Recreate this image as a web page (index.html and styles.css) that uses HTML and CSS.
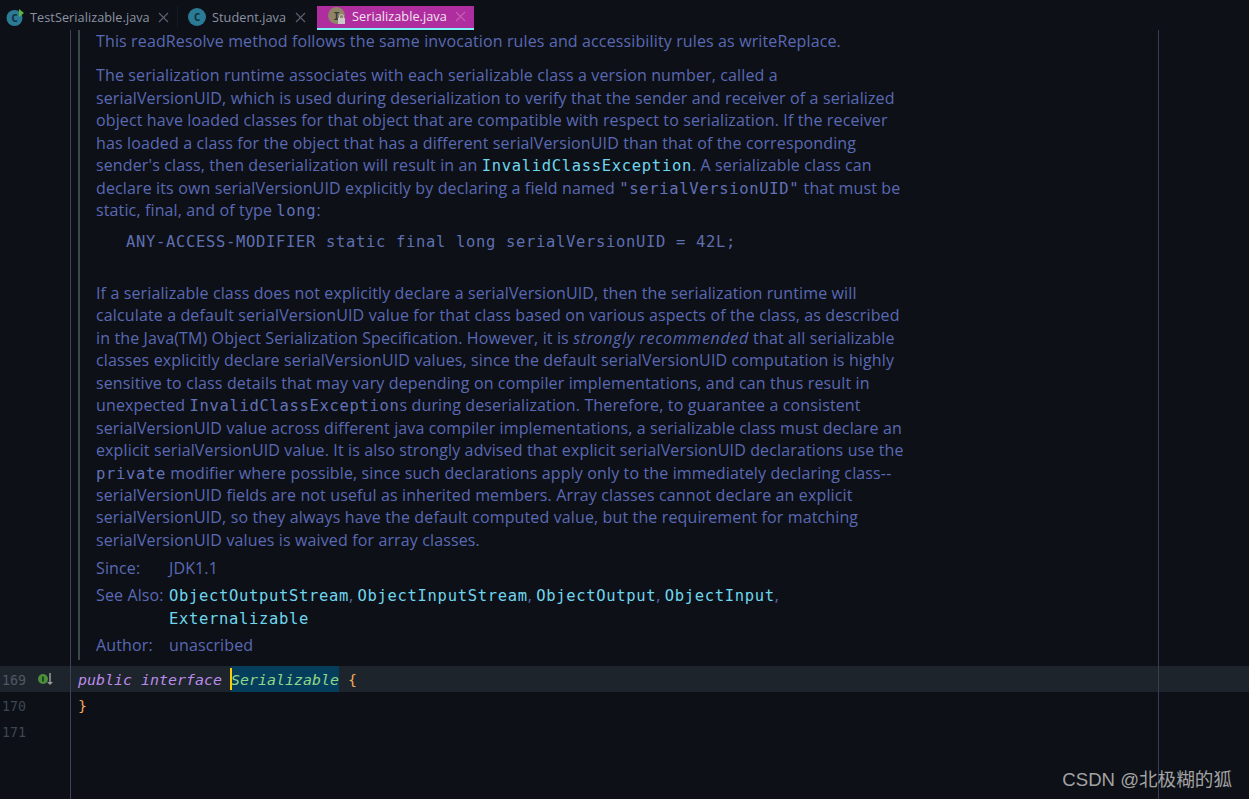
FILE: index.html
```html
<!DOCTYPE html>
<html lang="en">
  <head>
    <meta charset="UTF-8" />
    <meta name="viewport" content="width=device-width, initial-scale=1.0" />
    <title>Serializable.java</title>
    <link rel="stylesheet" href="styles.css">
  </head>
  <body>
    <div class="tabs">
      <div class="tab tab-first">
        <svg class="tab-icon" viewBox="0 0 18 18">
          <circle cx="8.5" cy="10" r="8" fill="#2b7a96" />
          <text x="8.5" y="14" class="icon-letter" fill="#12303c">C</text>
          <path d="M13 1 L18 5 L13 9 Z" fill="#5fb340" />
        </svg>
        <span class="tab-name">TestSerializable.java</span>
        <svg class="tab-close" viewBox="0 0 11 11"><path d="M1 1 L10 10 M10 1 L1 10" /></svg>
      </div>
      <div class="tab tab-second">
        <svg class="tab-icon" viewBox="0 0 18 18">
          <circle cx="9" cy="9" r="9" fill="#2b7a96" />
          <text x="9" y="13" class="icon-letter" fill="#12303c">C</text>
        </svg>
        <span class="tab-name">Student.java</span>
        <svg class="tab-close" viewBox="0 0 11 11"><path d="M1 1 L10 10 M10 1 L1 10" /></svg>
      </div>
      <div class="tab tab-active">
        <svg class="tab-icon" viewBox="0 0 18 18">
          <circle cx="8.5" cy="8.5" r="8.5" fill="#8f8468" />
          <text x="8.5" y="12.5" class="icon-letter" fill="#3d3a30">I</text>
          <rect x="10" y="11" width="7" height="6" fill="#c9c9c9" />
          <path d="M11.5 11 V9.5 a2 2 0 0 1 4 0 V11" fill="none" stroke="#c9c9c9" />
        </svg>
        <span class="tab-name">Serializable.java</span>
        <svg class="tab-close" viewBox="0 0 11 11"><path d="M1 1 L10 10 M10 1 L1 10" /></svg>
      </div>
    </div>

    <div class="editor">
      <div class="doc-row">
        <div class="gutter"></div>
        <div class="doc">
          <p class="doc-first">This readResolve method follows the same invocation rules and accessibility rules as writeReplace.</p>
          <p class="doc-para">
            The serialization runtime associates with each serializable class a version number, called a<br>
            serialVersionUID, which is used during deserialization to verify that the sender and receiver of a serialized<br>
            object have loaded classes for that object that are compatible with respect to serialization. If the receiver<br>
            has loaded a class for the object that has a different serialVersionUID than that of the corresponding<br>
            sender's class, then deserialization will result in an <code class="link">InvalidClassException</code>. A serializable class can<br>
            declare its own serialVersionUID explicitly by declaring a field named <code>"serialVersionUID"</code> that must be<br>
            static, final, and of type <code>long</code>:
          </p>
          <pre class="doc-code">ANY-ACCESS-MODIFIER static final long serialVersionUID = 42L;</pre>
          <p class="doc-para">
            If a serializable class does not explicitly declare a serialVersionUID, then the serialization runtime will<br>
            calculate a default serialVersionUID value for that class based on various aspects of the class, as described<br>
            in the Java(TM) Object Serialization Specification. However, it is <em>strongly recommended</em> that all serializable<br>
            classes explicitly declare serialVersionUID values, since the default serialVersionUID computation is highly<br>
            sensitive to class details that may vary depending on compiler implementations, and can thus result in<br>
            unexpected <code>InvalidClassException</code>s during deserialization. Therefore, to guarantee a consistent<br>
            serialVersionUID value across different java compiler implementations, a serializable class must declare an<br>
            explicit serialVersionUID value. It is also strongly advised that explicit serialVersionUID declarations use the<br>
            <code>private</code> modifier where possible, since such declarations apply only to the immediately declaring class--<br>
            serialVersionUID fields are not useful as inherited members. Array classes cannot declare an explicit<br>
            serialVersionUID, so they always have the default computed value, but the requirement for matching<br>
            serialVersionUID values is waived for array classes.
          </p>
          <div class="tag tag-since">
            <span class="tag-label">Since:</span>
            <span>JDK1.1</span>
          </div>
          <div class="tag tag-see">
            <span class="tag-label">See Also:</span>
            <span>
              <code class="link">ObjectOutputStream</code>, <code class="link">ObjectInputStream</code>, <code class="link">ObjectOutput</code>, <code class="link">ObjectInput</code>,<br>
              <code class="link">Externalizable</code>
            </span>
          </div>
          <div class="tag tag-author">
            <span class="tag-label">Author:</span>
            <span>unascribed</span>
          </div>
        </div>
      </div>

      <div class="code-line current">
        <div class="gutter">
          <span class="line-no">169</span>
          <svg class="gutter-icon" viewBox="0 0 18 14">
            <circle cx="5" cy="7" r="5" fill="#4c8f3a" />
            <rect x="4.2" y="4.5" width="1.6" height="5" fill="#16301a" />
            <path d="M12 1 V11" stroke="#9a9a9a" stroke-width="1.5" />
            <path d="M9 10 H15 L12 13 Z" fill="#9a9a9a" />
          </svg>
        </div>
        <div class="code"><em class="kw">public</em> <em class="kw">interface</em> <span class="caret"></span><em class="sel">Serializable</em> <span class="brace">{</span></div>
      </div>
      <div class="code-line">
        <div class="gutter"><span class="line-no">170</span></div>
        <div class="code"><span class="brace">}</span></div>
      </div>
      <div class="code-line">
        <div class="gutter"><span class="line-no">171</span></div>
        <div class="code"></div>
      </div>
      <div class="rest">
        <div class="gutter"></div>
      </div>
      <div class="margin-line"></div>
      <div class="watermark">CSDN @北极糊的狐</div>
    </div>
  </body>
</html>
```
FILE: styles.css
```css
html,
body {
  margin: 0;
  height: 100%;
}
body {
  width: 1249px;
  height: 799px;
  overflow: hidden;
  background: #0d1017;
  display: flex;
  flex-direction: column;
  font-family: "Open Sans", "Liberation Sans", sans-serif;
}

/* Tab bar */
.tabs {
  height: 30px;
  display: flex;
  align-items: flex-end;
  flex-shrink: 0;
}
.tab {
  height: 22px;
  box-sizing: border-box;
  display: flex;
  align-items: center;
  font-size: 12.7px;
  letter-spacing: 0.05px;
  color: #8b93a3;
  margin-bottom: 2px;
}
.tab-first {
  width: 178px;
  padding-left: 6px;
  border-right: 1px solid #161a22;
}
.tab-second {
  width: 139px;
  padding-left: 10px;
}
.tab-active {
  width: 157px;
  padding-left: 11px;
  background: #b02d9f;
  color: #f0e4ee;
  margin-bottom: 0;
  height: 24px;
  padding-bottom: 2px;
  border-bottom: 2px solid #7ff4fb;
}
.tab-icon {
  width: 18px;
  height: 18px;
  margin-right: 6px;
  flex-shrink: 0;
}
.icon-letter {
  font-family: "DejaVu Sans Mono", monospace;
  font-size: 11px;
  font-weight: bold;
  text-anchor: middle;
}
.tab-close {
  width: 11px;
  height: 11px;
  margin-left: 8px;
  fill: none;
  stroke: #5c6370;
  stroke-width: 1.1;
}
.tab-second .tab-close {
  margin-left: 9px;
}
.tab-active .tab-close {
  stroke: #c45fb6;
  margin-left: 8px;
}

/* Editor */
.editor {
  flex: 1;
  position: relative;
  display: flex;
  flex-direction: column;
}
.gutter {
  width: 70px;
  flex-shrink: 0;
  border-right: 1px solid #3c4358;
  display: flex;
  align-items: center;
}
.doc-row {
  display: flex;
  height: 636px;
}
.doc {
  margin-left: 7px;
  margin-bottom: 6px;
  padding-left: 16px;
  border-left: 2px solid #3a4a4c;
  font-size: 16px;
  line-height: 22.47px;
  letter-spacing: 0.13px;
  color: #5a69b4;
  white-space: nowrap;
}
.doc p {
  margin: 0;
}
.doc .doc-first {
  margin-bottom: 12px;
}
code,
pre {
  font-family: "DejaVu Sans Mono", monospace;
}
.doc code {
  font-size: 15.5px;
  line-height: 1;
  letter-spacing: 0.67px;
  color: #6272b8;
}
.doc code.link {
  color: #6fd6ee;
}
.doc em {
  font-style: italic;
  letter-spacing: 0.65px;
}
.doc .doc-code {
  margin: 0 0 29px 30px;
  padding-top: 9px;
  font-size: 15.5px;
  letter-spacing: 0.67px;
  line-height: 22px;
  color: #5f6fb0;
}
.tag {
  display: flex;
}
.tag-label {
  width: 73px;
  flex-shrink: 0;
}
.tag-since {
  margin-top: 5.5px;
}
.tag-see {
  margin-top: 4.3px;
  line-height: 23px;
}
.tag-author {
  margin-top: 4.3px;
}

.code-line {
  display: flex;
  height: 26.4px;
  flex-shrink: 0;
}
.code-line.current {
  background: #1d242c;
}
.line-no {
  width: 36px;
  padding-left: 2px;
  padding-top: 2px;
  font-family: "DejaVu Sans Mono", monospace;
  font-size: 13.3px;
  color: #3d4751;
}
.current .line-no {
  color: #4f5964;
}
.gutter-icon {
  width: 18px;
  height: 14px;
}
.code {
  padding-left: 7px;
  white-space: pre;
  line-height: 28px;
  font-family: "DejaVu Sans Mono", monospace;
  font-size: 14.9px;
  letter-spacing: 0.03px;
}
.code em {
  font-style: italic;
}
.kw {
  color: #bb8be8;
}
.sel {
  color: #8fd68a;
  background: #043e5c;
  display: inline-block;
  height: 26.4px;
  vertical-align: top;
}
.caret {
  display: inline-block;
  vertical-align: top;
  width: 2px;
  height: 22px;
  margin-top: 2px;
  background: #ffcc00;
  margin-left: -1px;
  margin-right: -1px;
  position: relative;
  z-index: 1;
}
.brace {
  color: #f0a85a;
}
.rest {
  flex: 1;
  display: flex;
}

/* Overlays */
.margin-line {
  position: absolute;
  top: 0;
  bottom: 0;
  left: 1158px;
  width: 1px;
  background: #383e52;
}
.watermark {
  position: absolute;
  right: 17px;
  bottom: 8px;
  font-family: "Liberation Sans", "Noto Sans CJK SC", sans-serif;
  font-size: 18.6px;
  color: #a3a3a3;
}
```
